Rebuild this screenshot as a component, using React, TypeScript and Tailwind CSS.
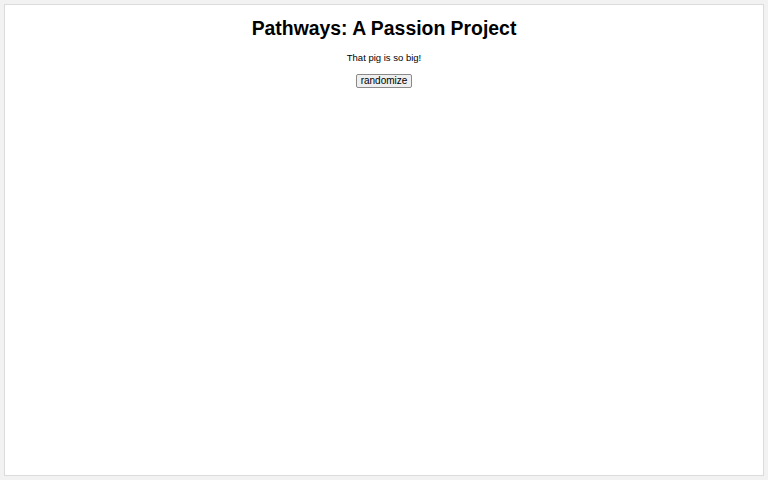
export default function App() {
  return (
    <div className="h-[480px] w-[768px] bg-[#f2f2f2] p-[4px] font-['Liberation_Sans',Arial,sans-serif]">
      <div className="flex h-full flex-col items-center border border-[#dcdcdc] bg-white">
        <h1 className="mt-[11px] text-[19.4px] font-bold leading-[24px] text-black">Pathways: A Passion Project</h1>
        <p className="mt-[12px] text-[9.5px] leading-[12px] text-black">That pig is so big!</p>
        <button className="mt-[10px] rounded-[2px] border border-[#8a8a8a] bg-[#efefef] px-[4px] text-[10px] leading-[12px] text-black">
          randomize
        </button>
      </div>
    </div>
  )
}
